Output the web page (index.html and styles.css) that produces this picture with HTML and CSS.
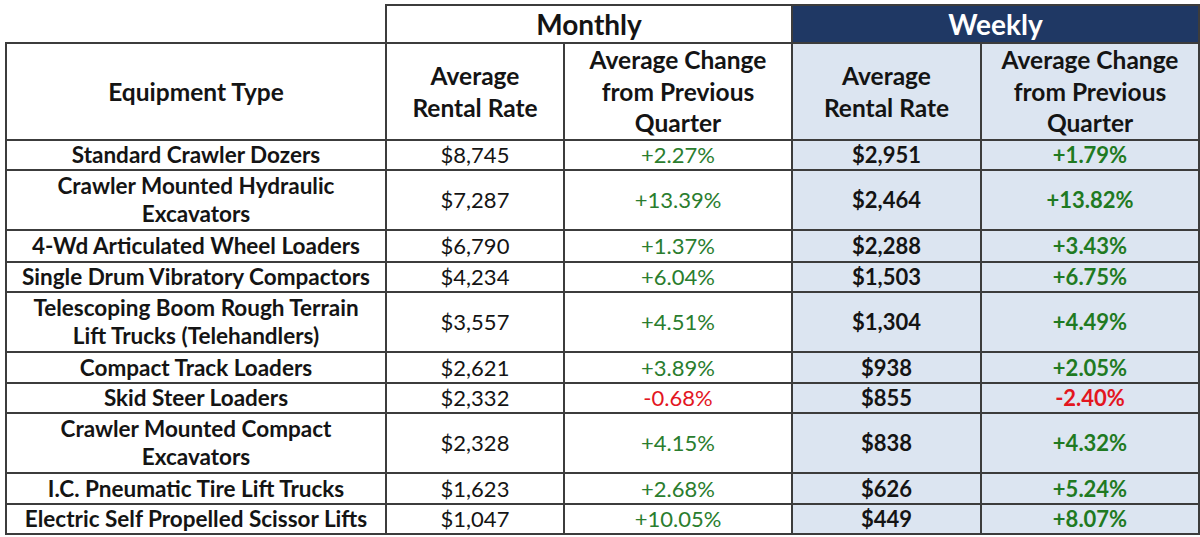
FILE: index.html
```html
<!DOCTYPE html>
<html>
<head>
<meta charset="utf-8">
<link rel="stylesheet" href="styles.css">
</head>
<body>
<table class="rates">
  <colgroup>
    <col class="c-type"><col class="c-mrate"><col class="c-mchg"><col class="c-wrate"><col class="c-wchg">
  </colgroup>
  <thead>
    <tr class="h1">
      <th class="blank"></th>
      <th colspan="2" class="monthly">Monthly</th>
      <th colspan="2" class="weekly">Weekly</th>
    </tr>
    <tr class="h2">
      <th>Equipment Type</th>
      <th>Average<br>Rental Rate</th>
      <th>Average Change<br>from Previous<br>Quarter</th>
      <th class="wk">Average<br>Rental Rate</th>
      <th class="wk">Average Change<br>from Previous<br>Quarter</th>
    </tr>
  </thead>
  <tbody>
    <tr class="r29"><td class="name">Standard Crawler Dozers</td><td>$8,745</td><td class="up">+2.27%</td><td class="wk b">$2,951</td><td class="wk b up">+1.79%</td></tr>
    <tr class="r60"><td class="name">Crawler Mounted Hydraulic<br>Excavators</td><td>$7,287</td><td class="up">+13.39%</td><td class="wk b">$2,464</td><td class="wk b up">+13.82%</td></tr>
    <tr class="r32"><td class="name">4-Wd Articulated Wheel Loaders</td><td>$6,790</td><td class="up">+1.37%</td><td class="wk b">$2,288</td><td class="wk b up">+3.43%</td></tr>
    <tr class="r29"><td class="name">Single Drum Vibratory Compactors</td><td>$4,234</td><td class="up">+6.04%</td><td class="wk b">$1,503</td><td class="wk b up">+6.75%</td></tr>
    <tr class="r60"><td class="name">Telescoping Boom Rough Terrain<br>Lift Trucks (Telehandlers)</td><td>$3,557</td><td class="up">+4.51%</td><td class="wk b">$1,304</td><td class="wk b up">+4.49%</td></tr>
    <tr class="r31"><td class="name">Compact Track Loaders</td><td>$2,621</td><td class="up">+3.89%</td><td class="wk b">$938</td><td class="wk b up">+2.05%</td></tr>
    <tr class="r30"><td class="name">Skid Steer Loaders</td><td>$2,332</td><td class="down">-0.68%</td><td class="wk b">$855</td><td class="wk b down">-2.40%</td></tr>
    <tr class="r60"><td class="name">Crawler Mounted Compact<br>Excavators</td><td>$2,328</td><td class="up">+4.15%</td><td class="wk b">$838</td><td class="wk b up">+4.32%</td></tr>
    <tr class="r31"><td class="name">I.C. Pneumatic Tire Lift Trucks</td><td>$1,623</td><td class="up">+2.68%</td><td class="wk b">$626</td><td class="wk b up">+5.24%</td></tr>
    <tr class="r30"><td class="name">Electric Self Propelled Scissor Lifts</td><td>$1,047</td><td class="up">+10.05%</td><td class="wk b">$449</td><td class="wk b up">+8.07%</td></tr>
  </tbody>
</table>
</body>
</html>
```

FILE: styles.css
```css
html, body {
  margin: 0;
  padding: 0;
  background: #ffffff;
}
body {
  padding: 4px 0 0 5px;
  font-family: Lato, "Open Sans", "Liberation Sans", sans-serif;
  color: #141414;
}
.rates {
  border-collapse: collapse;
  table-layout: fixed;
  width: 1193px;
}
.c-type { width: 380px; }
.c-mrate { width: 178px; }
.c-mchg { width: 228px; }
.c-wrate { width: 189px; }
.c-wchg { width: 218px; }

.rates th, .rates td {
  border: 2px solid #3c3c3c;
  padding: 0;
  text-align: center;
  vertical-align: middle;
  font-size: 22px;
  line-height: 28px;
  white-space: nowrap;
}
.rates th {
  font-weight: 700;
  font-size: 24.5px;
  line-height: 31.5px;
}
.h1 { height: 38px; }
.h1 th { font-size: 28px; line-height: 34px; }
.h1 .blank { border: none; border-bottom: 2px solid #3c3c3c; }
.h2 { height: 97px; }
.weekly { background: #1f3864; color: #ffffff; }
.wk { background: #dce5f1; }
.rates td.name { font-weight: 700; font-size: 22.5px; }
.b { font-weight: 700; }
.up { color: #2a7d2e; }
.b.up { color: #1f7a22; }
.down { color: #e3161f; }
.r29 { height: 29px; }
.r30 { height: 30px; }
.r31 { height: 31px; }
.r32 { height: 32px; }
.r60 { height: 60px; }
.r61 { height: 61px; }
```
